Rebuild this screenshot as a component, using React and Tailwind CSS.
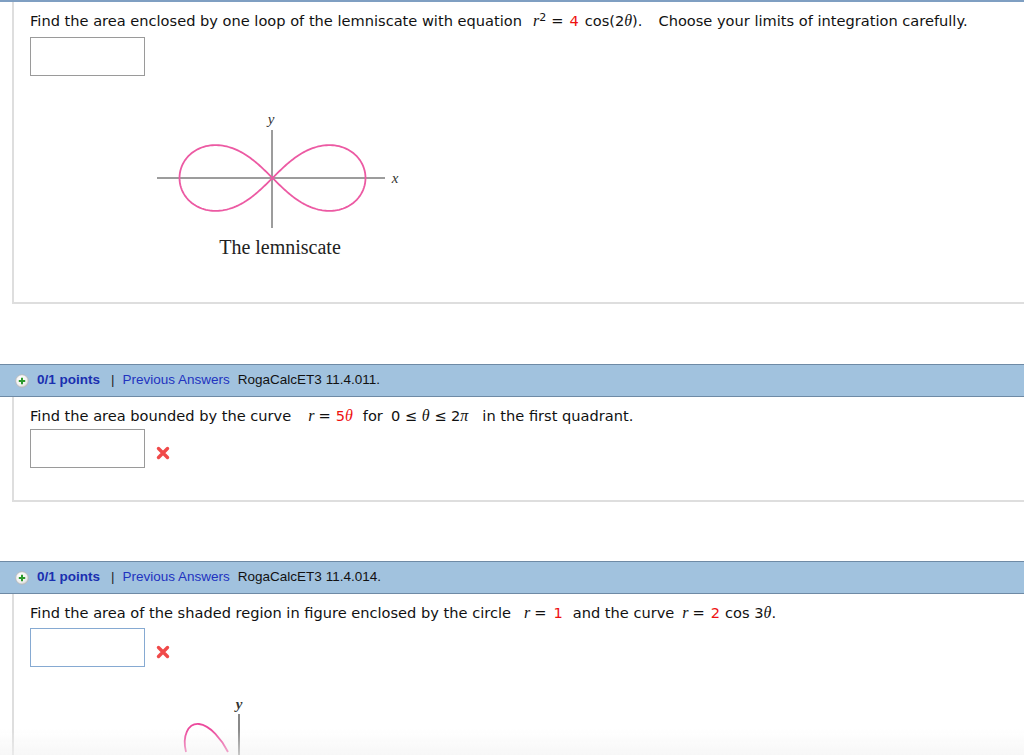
import React from "react";

function lemniscatePath(cx, cy, a) {
  const pts = [];
  const n = 240;
  for (let i = 0; i <= n; i++) {
    const t = (i / n) * Math.PI * 2;
    const s = Math.sin(t);
    const c = Math.cos(t);
    const d = 1 + s * s;
    const x = cx + (a * c) / d;
    const y = cy - (a * s * c) / d;
    pts.push(`${i === 0 ? "M" : "L"}${x.toFixed(2)} ${y.toFixed(2)}`);
  }
  return pts.join(" ") + " Z";
}

const M = ({ children }) => (
  <span className="font-['Liberation_Serif'] italic text-[16px]">{children}</span>
);
const Red = ({ children }) => <span className="text-[#ee1111]">{children}</span>;

function PlusIcon() {
  return (
    <svg width="14" height="14" viewBox="0 0 14 14" className="block">
      <defs>
        <radialGradient id="pg" cx="40%" cy="35%" r="70%">
          <stop offset="0%" stopColor="#ffffff" />
          <stop offset="70%" stopColor="#eeeeee" />
          <stop offset="100%" stopColor="#c8c8c8" />
        </radialGradient>
      </defs>
      <circle cx="7" cy="7" r="6.3" fill="url(#pg)" stroke="#b5b5b5" strokeWidth="0.8" />
      <path d="M7 3.8 V10.2 M3.8 7 H10.2" stroke="#2c9a2c" strokeWidth="2" />
    </svg>
  );
}

function XMark() {
  return (
    <svg width="14" height="14" viewBox="0 0 14 14" className="block">
      <path d="M2.5 2.5 L11.5 11.5 M11.5 2.5 L2.5 11.5" stroke="#f04a4a" strokeWidth="3.4" strokeLinecap="round" />
    </svg>
  );
}

function Header({ id }) {
  return (
    <div className="h-[33px] bg-[#a1c2de] border-t border-b border-[#6e8aa5] flex items-center pl-[15px] font-['Liberation_Sans'] text-[13.5px]">
      <PlusIcon />
      <span className="ml-[8px] font-bold text-[#1a2fb0]">0/1 points</span>
      <span className="ml-[11px] text-[#222]">|</span>
      <span className="ml-[8px] text-[#2233c0]">Previous Answers</span>
      <span className="ml-[8px] text-[#111]">RogaCalcET3 {id}</span>
    </div>
  );
}

export default function App() {
  return (
    <div className="min-h-screen bg-white border-t-2 border-[#7f9fc2] font-['DejaVu_Sans',sans-serif] text-[14.6px] text-[#111] overflow-hidden">
      {/* Card 1 */}
      <div className="ml-[12px] border-l-2 border-b-2 border-[#dedede] h-[302px] pl-[16px] pt-[10px]">
        <p className="leading-[18px] whitespace-nowrap">
          Find the area enclosed by one loop of the lemniscate with equation
          <span className="ml-[11px]"><M>r</M><sup className="text-[11px]">2</sup></span>
          <span className="ml-[5px]">=</span>
          <span className="ml-[6px]"><Red>4</Red></span>
          <span className="ml-[6px]">cos(2<M>θ</M>).</span>
          <span className="ml-[16px]">Choose your limits of integration carefully.</span>
        </p>
        <div className="mt-[7px] w-[115px] h-[39px] border border-[#9a9a9a] bg-white" />
        <svg width="260" height="125" viewBox="0 0 260 125" className="block ml-[120px] mt-[32px]">
          <line x1="7" y1="70" x2="235" y2="70" stroke="#3a3a3a" strokeWidth="1" />
          <line x1="122" y1="22" x2="122" y2="120" stroke="#3a3a3a" strokeWidth="1" />
          <path d={lemniscatePath(122.5, 70, 93)} fill="none" stroke="#ec5aa3" strokeWidth="1.8" />
          <text x="121" y="16" fontFamily="Liberation Serif" fontStyle="italic" fontSize="15" fill="#333" textAnchor="middle">y</text>
          <text x="245" y="75" fontFamily="Liberation Serif" fontStyle="italic" fontSize="15" fill="#333" textAnchor="middle">x</text>
        </svg>
        <div className="ml-[120px] w-[260px] text-center font-['Liberation_Serif'] text-[20px] leading-[20px] text-[#222] mt-[4px]">
          The lemniscate
        </div>
      </div>

      <div className="mt-[60px]">
        <Header id="11.4.011." />
      </div>

      {/* Card 2 */}
      <div className="ml-[12px] border-l-2 border-b-2 border-[#dedede] h-[105px] pl-[16px] pt-[10px]">
        <p className="leading-[18px] whitespace-nowrap">
          Find the area bounded by the curve
          <span className="ml-[17px]"><M>r</M></span>
          <span className="ml-[4px]">=</span>
          <span className="ml-[5px]"><Red>5<M>θ</M></Red></span>
          <span className="ml-[10px]">for</span>
          <span className="ml-[8px]">0 ≤ <M>θ</M> ≤ 2<M>π</M></span>
          <span className="ml-[14px]">in the first quadrant.</span>
        </p>
        <div className="mt-[4px] flex items-start">
          <div className="w-[115px] h-[39px] border border-[#9a9a9a] bg-white" />
          <div className="ml-[11px] mt-[17px]"><XMark /></div>
        </div>
      </div>

      <div className="mt-[59px]">
        <Header id="11.4.014." />
      </div>

      {/* Card 3 */}
      <div className="ml-[12px] border-l-2 border-[#dedede] h-[200px] pl-[16px] pt-[10px]">
        <p className="leading-[18px] whitespace-nowrap">
          Find the area of the shaded region in figure enclosed by the circle
          <span className="ml-[13px]"><M>r</M></span>
          <span className="ml-[4px]">=</span>
          <span className="ml-[7px]"><Red>1</Red></span>
          <span className="ml-[10px]">and the curve</span>
          <span className="ml-[8px]"><M>r</M></span>
          <span className="ml-[4px]">=</span>
          <span className="ml-[6px]"><Red>2</Red></span>
          <span className="ml-[5px]">cos 3<M>θ</M>.</span>
        </p>
        <div className="mt-[6px] flex items-start">
          <div className="w-[115px] h-[39px] border border-[#86aad2] bg-white" />
          <div className="ml-[11px] mt-[17px]"><XMark /></div>
        </div>
        <svg width="100" height="90" viewBox="0 0 100 90" className="block ml-[140px] mt-[29px]">
          <text x="69" y="13" fontFamily="Liberation Serif" fontStyle="italic" fontWeight="bold" fontSize="15" fill="#333" textAnchor="middle">y</text>
          <line x1="69" y1="18" x2="69" y2="90" stroke="#3a3a3a" strokeWidth="1.2" />
          <path d="M16 56 C12 40, 18 27, 29 28 C40 29, 52 44, 58 56" fill="none" stroke="#ec4a9d" strokeWidth="1.8" />
        </svg>
      </div>

      <div className="fixed left-0 right-0 bottom-0 h-[26px] pointer-events-none bg-gradient-to-b from-[#ffffff]/0 to-[#f2f2f2]/60" />
    </div>
  );
}
